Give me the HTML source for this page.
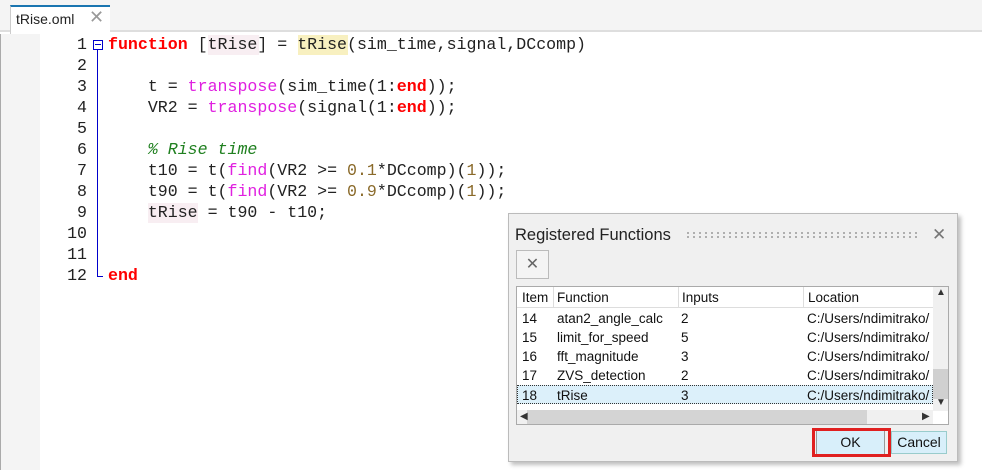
<!DOCTYPE html>
<html><head><meta charset="utf-8"><style>
*{margin:0;padding:0;box-sizing:border-box}
body{width:982px;height:470px;overflow:hidden;background:#fff;position:relative;font-family:"Liberation Sans",sans-serif}
.abs{position:absolute}
.code{font-family:"Liberation Mono",monospace;font-size:16.6px;line-height:21px;color:#222;white-space:pre}
.k{color:#f00;font-weight:bold}.f{color:#e020e0}.n{color:#8a6a2a}.c{color:#208020;font-style:italic}
.ln{font-family:"Liberation Mono",monospace;font-size:16.6px;line-height:21px;color:#222;text-align:right;width:50px;left:37px;top:34px;white-space:pre}
.row{position:absolute;left:0;width:416px;height:19px;font-size:13.5px;line-height:19px;color:#111}
.row span{position:absolute}
</style></head><body>
<div class="abs" style="left:0;top:0;width:982px;height:32px;background:#f4f4f4;border-bottom:2px solid #dedede"></div>
<div class="abs" style="left:0;top:34px;width:40px;height:436px;background:#f4f4f4;border-left:1px solid #aaa"></div>
<div class="abs" style="left:10px;top:5px;width:100px;height:29px;background:#fff;border-top:2px solid #1a75b0;border-left:1px solid #ccc"></div>
<div class="abs" style="left:16px;top:11px;font-size:14px;color:#222">tRise.oml</div>
<div class="abs" style="left:89px;top:7px;font-size:18px;color:#999">✕</div>
<div class="abs ln">1
2
3
4
5
6
7
8
9
10
11
12</div>
<div class="abs" style="left:93px;top:40px;width:10px;height:10px;border:1px solid #00c;background:#fff"></div>
<div class="abs" style="left:95px;top:44px;width:6px;height:1px;background:#00c"></div>
<div class="abs" style="left:97px;top:50px;width:1px;height:227px;background:#00c"></div>
<div class="abs" style="left:97px;top:276px;width:6px;height:1px;background:#00c"></div>
<div class="abs" style="left:208px;top:35px;width:51px;height:20px;background:#f8eef2"></div>
<div class="abs" style="left:298px;top:35px;width:50px;height:20px;background:#f8f0c0"></div>
<div class="abs" style="left:148px;top:203px;width:50px;height:20px;background:#f8eef2"></div>
<div class="abs code" style="left:108px;top:34px"><span class="k">function</span> [tRise] = tRise(sim_time,signal,DCcomp)

    t = <span class="f">transpose</span>(sim_time(1:<span class="k">end</span>));
    VR2 = <span class="f">transpose</span>(signal(1:<span class="k">end</span>));

    <span class="c">% Rise time</span>
    t10 = t(<span class="f">find</span>(VR2 &gt;= <span class="n">0.1</span>*DCcomp)(<span class="n">1</span>));
    t90 = t(<span class="f">find</span>(VR2 &gt;= <span class="n">0.9</span>*DCcomp)(<span class="n">1</span>));
    tRise = t90 - t10;


<span class="k">end</span></div>

<div class="abs" style="left:508px;top:213px;width:450px;height:249px;background:#f0f0f0;border:1px solid #bbb;box-shadow:3px 3px 4px rgba(0,0,0,.25)"></div>
<div class="abs" style="left:515px;top:226px;font-size:16.5px;color:#222">Registered Functions</div>
<div class="abs" style="left:685px;top:231px;width:232px;height:9px;background-image:radial-gradient(circle,#aaa 1px,transparent 1.2px);background-size:6px 4px"></div>
<div class="abs" style="left:932px;top:225px;font-size:17px;color:#777">✕</div>
<div class="abs" style="left:516px;top:250px;width:33px;height:29px;border:1px solid #bbb;background:#f4f4f4;color:#666;font-size:16px;text-align:center;line-height:27px">✕</div>
<div class="abs" style="left:516px;top:286px;width:433px;height:139px;background:#fff;border:1px solid #aaa;overflow:hidden">
 <div class="row" style="top:0;height:21px;line-height:21px;border-bottom:1px solid #ddd;font-size:13.5px">
  <span style="left:5px">Item</span><span style="left:40px">Function</span><span style="left:165px">Inputs</span><span style="left:291px">Location</span>
  <span style="left:36px;top:0;width:1px;height:21px;background:#ddd"></span><span style="left:161px;width:1px;height:21px;background:#ddd"></span><span style="left:286px;width:1px;height:21px;background:#ddd"></span>
 </div>
 <div class="row" style="top:22px"><span style="left:5px">14</span><span style="left:40px">atan2_angle_calc</span><span style="left:164px">2</span><span style="left:290px">C:/Users/ndimitrako/</span></div>
 <div class="row" style="top:41px"><span style="left:5px">15</span><span style="left:40px">limit_for_speed</span><span style="left:164px">5</span><span style="left:290px">C:/Users/ndimitrako/</span></div>
 <div class="row" style="top:60px"><span style="left:5px">16</span><span style="left:40px">fft_magnitude</span><span style="left:164px">3</span><span style="left:290px">C:/Users/ndimitrako/</span></div>
 <div class="row" style="top:79px"><span style="left:5px">17</span><span style="left:40px">ZVS_detection</span><span style="left:164px">2</span><span style="left:290px">C:/Users/ndimitrako/</span></div>
 <div class="row" style="top:98px;background:#dcf0fa;border:1px dotted #333"><span style="left:4px">18</span><span style="left:39px">tRise</span><span style="left:163px">3</span><span style="left:289px">C:/Users/ndimitrako/</span></div>
 <div class="abs" style="left:416px;top:0;width:16px;height:124px;background:#f0f0f0"></div>
 <div class="abs" style="left:416px;top:82px;width:16px;height:30px;background:#d0d0d0"></div>
 <div class="abs" style="left:419px;top:0;font-size:10px;color:#333">▲</div>
 <div class="abs" style="left:419px;top:110px;font-size:10px;color:#333">▼</div>
 <div class="abs" style="left:0;top:123px;width:416px;height:16px;background:#f0f0f0"></div>
 <div class="abs" style="left:10px;top:123px;width:340px;height:15px;background:#d4d4d4"></div>
 <div class="abs" style="left:3px;top:124px;font-size:10px;color:#333">◀</div>
 <div class="abs" style="left:405px;top:124px;font-size:10px;color:#333">▶</div>
</div>
<div class="abs" style="left:812px;top:428px;width:79px;height:29px;border:3px solid #e02020"></div>
<div class="abs" style="left:816px;top:431px;width:69px;height:23px;background:#d8effa;border-left:1px solid #999;border-right:1px solid #999;font-size:14px;text-align:center;line-height:23px;color:#111">OK</div>
<div class="abs" style="left:891px;top:431px;width:56px;height:23px;background:#d8effa;border:1px solid #9cc;font-size:14px;text-align:center;line-height:21px;color:#111">Cancel</div>
</body></html>
